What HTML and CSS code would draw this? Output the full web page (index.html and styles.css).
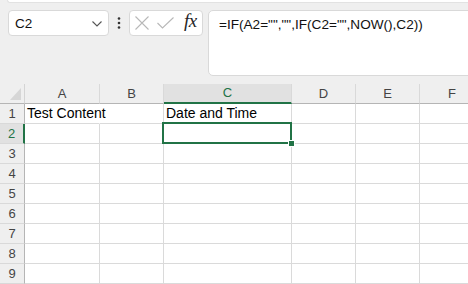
FILE: index.html
```html
<!DOCTYPE html>
<html lang="en">
<head>
  <meta charset="UTF-8">
  <title>Sheet</title>
  <link rel="stylesheet" href="styles.css">
</head>
<body>
  <div class="ribbon-edge"></div>
  <div class="toolbar">
    <div class="name-box">
      <span>C2</span>
      <svg class="chevron" width="10" height="6" viewBox="0 0 10 6"><path d="M0.5 0.5 L5 5 L9.5 0.5" fill="none" stroke="#555" stroke-width="1.1"/></svg>
    </div>
    <div class="more">
      <svg width="4" height="12" viewBox="0 0 4 12"><circle cx="2" cy="1.5" r="1.3" fill="#333"/><circle cx="2" cy="6" r="1.3" fill="#333"/><circle cx="2" cy="10.5" r="1.3" fill="#333"/></svg>
    </div>
    <div class="fn-buttons">
      <svg class="cancel" width="14" height="14" viewBox="0 0 14 14"><path d="M0.5 0.5 L13.5 13.5 M13.5 0.5 L0.5 13.5" stroke="#b8b8b8" stroke-width="1.1"/></svg>
      <svg class="enter" width="17" height="12" viewBox="0 0 17 12"><path d="M0.5 6 L5.5 11 L16.5 0.5" fill="none" stroke="#b8b8b8" stroke-width="1.1"/></svg>
      <span class="fx">fx</span>
    </div>
    <div class="formula">=IF(A2="","",IF(C2="",NOW(),C2))</div>
  </div>

  <div class="sheet" id="sheet">
    <div class="corner"><span class="tri"></span></div>
  </div>

  <script>
    const sheet = document.getElementById('sheet');
    const cols = ['A', 'B', 'C', 'D', 'E', 'F'];

    cols.forEach(c => {
      const h = document.createElement('div');
      h.className = 'col-head' + (c === 'C' ? ' active' : '') + (c === 'F' ? ' last' : '');
      h.textContent = c;
      sheet.appendChild(h);
    });

    for (let r = 1; r <= 9; r++) {
      const rh = document.createElement('div');
      rh.className = 'row-head' + (r === 2 ? ' active' : '');
      rh.textContent = r;
      sheet.appendChild(rh);
      cols.forEach(c => {
        const cell = document.createElement('div');
        cell.className = 'cell';
        if (r === 1 && c === 'A') {
          cell.classList.add('spill');
          cell.innerHTML = '<span class="val">Test Content</span>';
        }
        if (r === 1 && c === 'C') cell.innerHTML = '<span class="val">Date and Time</span>';
        if (r === 2 && c === 'C') {
          cell.classList.add('selected');
          cell.innerHTML = '<span class="handle"></span>';
        }
        sheet.appendChild(cell);
      });
    }
  </script>
</body>
</html>
```

FILE: styles.css
```css
body {
  margin: 0;
  background: #efefef;
  font-family: 'Liberation Sans', Arial, sans-serif;
  overflow: hidden;
  width: 468px;
  height: 284px;
}

.ribbon-edge {
  height: 2px;
  margin-left: 7px;
  background: #fff;
  border-left: 1px solid #e2e2e2;
  border-bottom: 1px solid #e2e2e2;
  border-bottom-left-radius: 5px;
}

.toolbar {
  display: flex;
  align-items: flex-start;
  margin-top: 7px;
  padding-left: 8px;
  height: 66px;
}

.name-box {
  width: 101px;
  height: 26px;
  box-sizing: border-box;
  background: #fff;
  border: 1px solid #d9d9d9;
  border-radius: 4px;
  display: flex;
  align-items: center;
  justify-content: space-between;
  padding: 0 6px 0 6px;
  font-size: 13.5px;
  color: #111;
}

.chevron {
  margin-top: 1px;
}

.more {
  width: 20px;
  height: 26px;
  display: flex;
  align-items: center;
  justify-content: center;
}

.fn-buttons {
  width: 74px;
  height: 26px;
  box-sizing: border-box;
  background: #fff;
  border: 1px solid #d9d9d9;
  border-radius: 4px;
  display: flex;
  align-items: center;
  padding-left: 5px;
}

.enter {
  margin-left: 8px;
}

.fx {
  margin-left: 10px;
  font-family: 'Liberation Serif', 'Times New Roman', serif;
  font-style: italic;
  font-size: 19px;
  color: #262626;
  letter-spacing: -0.5px;
  margin-top: -4px;
}

.formula {
  flex: 1;
  margin-left: 5px;
  margin-right: -6px;
  height: 66px;
  box-sizing: border-box;
  background: #fff;
  border: 1px solid #d9d9d9;
  border-radius: 5px;
  padding: 6px 0 0 10px;
  font-size: 13.6px;
  color: #111;
}

.sheet {
  margin-top: 8px;
  display: grid;
  grid-template-columns: 25px 75px 64px 128px 64px 64px 49px;
  grid-auto-rows: 20px;
  width: 468px;
}

.corner {
  position: relative;
  border-right: 1px solid #d4d4d4;
  border-bottom: 1px solid #b5b5b5;
}

.tri {
  position: absolute;
  right: 3px;
  bottom: 3px;
  width: 0;
  height: 0;
  border-left: 11px solid transparent;
  border-bottom: 12px solid #d6d6d6;
}

.col-head {
  box-sizing: border-box;
  border-right: 1px solid #d9d9d9;
  border-bottom: 1px solid #b5b5b5;
  text-align: center;
  font-size: 13px;
  line-height: 19px;
  color: #444;
}

.col-head.last {
  border-right: none;
  padding-left: 15px;
}

.col-head.active {
  background: #e1e1e1;
  color: #217346;
  border-bottom: 2px solid #217346;
  line-height: 18px;
}

.row-head {
  box-sizing: border-box;
  border-right: 1px solid #b5b5b5;
  border-bottom: 1px solid #d9d9d9;
  text-align: center;
  font-size: 13px;
  line-height: 20px;
  color: #444;
}

.row-head.active {
  background: #e1e1e1;
  color: #217346;
  border-right: 2px solid #217346;
}

.cell {
  position: relative;
  box-sizing: border-box;
  background: #fff;
  border-right: 1px solid #dadada;
  border-bottom: 1px solid #dadada;
  padding-left: 2px;
  font-size: 14px;
  line-height: 19px;
  color: #000;
  white-space: nowrap;
}

.cell.spill {
  border-right-color: #fff;
}

.val {
  position: relative;
  z-index: 1;
}

.cell.selected::after {
  content: '';
  position: absolute;
  left: -2px;
  top: -2px;
  right: -1px;
  bottom: -1px;
  border: 2px solid #217346;
}

.handle {
  position: absolute;
  right: -4px;
  bottom: -4px;
  width: 5px;
  height: 5px;
  background: #217346;
  border: 1px solid #fff;
  z-index: 2;
}
```
